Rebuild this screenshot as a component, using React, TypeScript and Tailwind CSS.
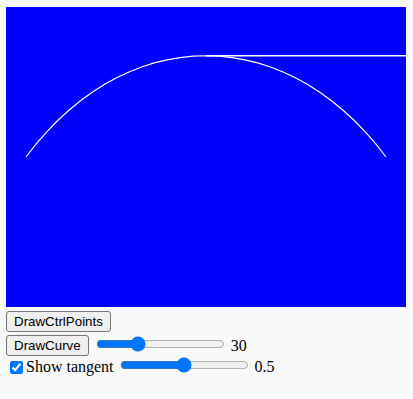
import { useState } from "react"

type Pt = { x: number; y: number }

// control points of the cubic, in canvas coords
const P: Pt[] = [
  { x: 20, y: 150 },
  { x: 120, y: 15 },
  { x: 280, y: 15 },
  { x: 380, y: 150 },
]

function bezier(t: number): Pt {
  const u = 1 - t
  const a = u * u * u
  const b = 3 * t * u * u
  const c = 3 * t * t * u
  const d = t * t * t
  return {
    x: a * P[0].x + b * P[1].x + c * P[2].x + d * P[3].x,
    y: a * P[0].y + b * P[1].y + c * P[2].y + d * P[3].y,
  }
}

function derivative(t: number): Pt {
  const u = 1 - t
  return {
    x: 3 * u * u * (P[1].x - P[0].x) + 6 * u * t * (P[2].x - P[1].x) + 3 * t * t * (P[3].x - P[2].x),
    y: 3 * u * u * (P[1].y - P[0].y) + 6 * u * t * (P[2].y - P[1].y) + 3 * t * t * (P[3].y - P[2].y),
  }
}

const btn =
  "h-[21px] font-['Liberation_Sans',Arial,sans-serif] text-[13.33px] leading-[17px] px-[7px] border border-[#767676] rounded-[3px] bg-[#efefef] text-black"

export default function App() {
  const [segments, setSegments] = useState(30)
  const [t, setT] = useState(0.5)
  const [showTangent, setShowTangent] = useState(true)

  const pts: Pt[] = []
  for (let i = 0; i <= segments; i++) pts.push(bezier(i / segments))
  const poly = pts.map((p) => `${p.x},${p.y}`).join(" ")

  const tp = bezier(t)
  const d = derivative(t)

  return (
    <div className="min-h-screen bg-[#f8f8f8] pl-[6px] pt-[7px] font-['Liberation_Serif','Times_New_Roman',serif] text-[16px] text-black">
      <svg width={400} height={300} className="block bg-[#0000ff]">
        <polyline points={poly} fill="none" stroke="white" strokeWidth={1.2} />
        {showTangent && (
          <line x1={tp.x} y1={tp.y} x2={tp.x + d.x} y2={tp.y + d.y} stroke="white" strokeWidth={1.6} />
        )}
      </svg>
      <div className="mt-[4px] flex h-[21px]">
        <button className={btn}>DrawCtrlPoints</button>
      </div>
      <div className="mt-[3px] flex items-center h-[21px]">
        <button className={btn}>DrawCurve</button>
        <input
          type="range"
          min={0}
          max={100}
          value={segments}
          onChange={(e) => setSegments(Math.max(1, Number(e.target.value)))}
          className="ml-[7px] mr-[2px] w-[129px] -translate-y-[2px]"
        />
        <span className="ml-[4px]">{segments}</span>
      </div>
      <div className="flex items-center h-[22px]">
        <input
          type="checkbox"
          checked={showTangent}
          onChange={(e) => setShowTangent(e.target.checked)}
          className="ml-[4px] mr-[3px] w-[13px] h-[13px]"
        />
        <span>Show tangent</span>
        <input
          type="range"
          min={0}
          max={1}
          step={0.01}
          value={t}
          onChange={(e) => setT(Number(e.target.value))}
          className="ml-[6px] mr-[2px] w-[129px] -translate-y-[2px]"
        />
        <span className="ml-[4px]">{t}</span>
      </div>
    </div>
  )
}
